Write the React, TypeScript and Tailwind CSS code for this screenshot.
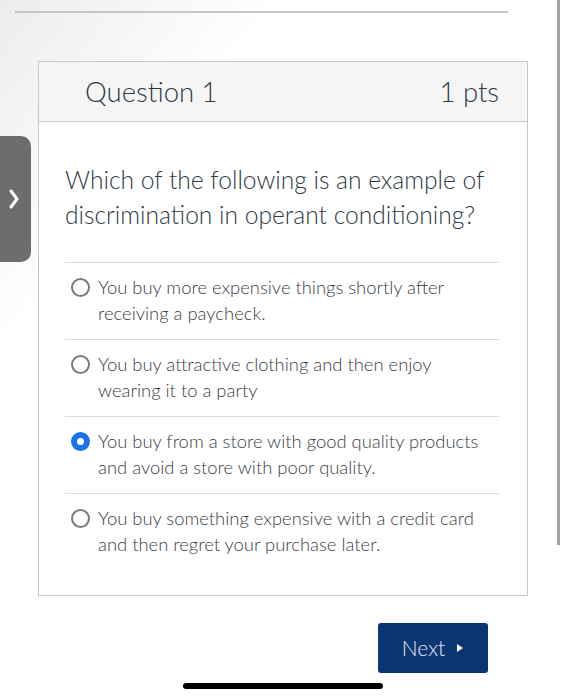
const answers = [
  { text: ["You buy more expensive things shortly after", "receiving a paycheck."], selected: false },
  { text: ["You buy attractive clothing and then enjoy", "wearing it to a party"], selected: false },
  { text: ["You buy from a store with good quality products", "and avoid a store with poor quality."], selected: true },
  { text: ["You buy something expensive with a credit card", "and then regret your purchase later."], selected: false },
];

function Radio({ selected }: { selected: boolean }) {
  if (selected) {
    return (
      <span className="mt-[4px] flex h-[19px] w-[19px] shrink-0 items-center justify-center rounded-full bg-[#1a73e8]">
        <span className="h-[7px] w-[7px] rounded-full bg-white" />
      </span>
    );
  }
  return <span className="mt-[4px] h-[19px] w-[19px] shrink-0 rounded-full border-2 border-[#7a7a7a] bg-white" />;
}

export default function App() {
  return (
    <div
      className="relative h-[700px] w-[565px] overflow-hidden bg-gradient-to-br from-[#ececec] via-white via-25% to-white font-light"
      style={{ fontFamily: "Lato, 'Open Sans', sans-serif" }}
    >
      {/* scrollbar */}
      <div className="absolute left-[557px] top-0 h-[545px] w-[3px] bg-[#a3a3a3]" />

      {/* side drawer tab */}
      <div className="absolute left-0 top-[136px] flex h-[126px] w-[31px] items-center justify-center rounded-r-[10px] bg-[#6d6d6d]">
        <svg width="12" height="22" viewBox="0 0 12 22" className="ml-[-4px]">
          <path d="M3 3 L9 11 L3 19" fill="none" stroke="white" strokeWidth="3" strokeLinecap="round" strokeLinejoin="round" />
        </svg>
      </div>

      <div className="pt-[11px]">
        <div className="ml-[15px] h-[2px] w-[493px] bg-[#c6c6c6]" />
      </div>

      <div className="ml-[38px] mt-[48px] w-[490px] border border-[#c5c9cc] bg-white">
        <div className="flex h-[60px] items-center justify-between border-b border-[#c5c9cc] bg-[#f5f5f5] pl-[46px] pr-[28px] text-[27.5px] text-[#2d3b45]">
          <span>Question 1</span>
          <span>1 pts</span>
        </div>

        <div className="pb-[25px] pl-[26px] pr-[28px] pt-[40px]">
          <p className="whitespace-nowrap text-[24.6px] leading-[35px] text-[#2d3b45]">
            Which of the following is an example of
            <br />
            discrimination in operant conditioning?
          </p>

          <div className="mt-[30px]">
            {answers.map((a, i) => (
              <div key={i} className="flex gap-[8px] border-t border-[#dcdcdc] pb-[13px] pl-[6px] pt-[11px]">
                <Radio selected={a.selected} />
                <div className="whitespace-nowrap text-[18.4px] leading-[26px] text-[#394046]">
                  {a.text[0]}
                  <br />
                  {a.text[1]}
                </div>
              </div>
            ))}
          </div>
        </div>
      </div>

      <div className="ml-[378px] mt-[27px] flex h-[50px] w-[110px] items-center justify-center gap-[11px] rounded-[3px] bg-[#0c3574] text-[21px] font-light text-[#e4e9f2]">
        <span>Next</span>
        <svg width="8" height="10" viewBox="0 0 8 10">
          <path d="M1 1 L7 5 L1 9 Z" fill="white" />
        </svg>
      </div>

      <div className="ml-[183px] mt-[10px] h-[6px] w-[200px] rounded-full bg-black" />
    </div>
  );
}
